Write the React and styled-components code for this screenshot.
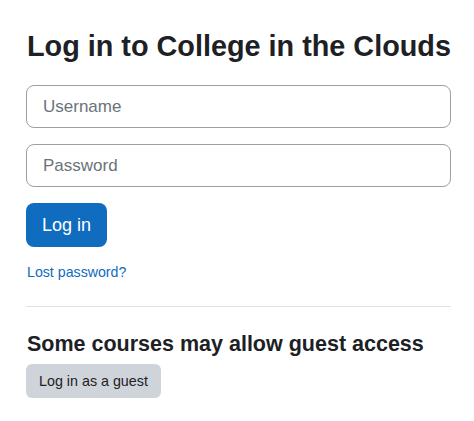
import React from "react";
import styled, { createGlobalStyle } from "styled-components";

const GlobalStyle = createGlobalStyle`
  html, body {
    margin: 0;
    padding: 0;
    background: #ffffff;
    font-family: "Liberation Sans", Arial, sans-serif;
    color: #1d2125;
  }
`;

const Page = styled.div`
  width: 474px;
  height: 421px;
  box-sizing: border-box;
  padding: 26px 23px 0 26px;
  display: flex;
  flex-direction: column;
`;

const Title = styled.h1`
  margin: 0 0 0 1px;
  font-size: 28.8px;
  line-height: 40px;
  font-weight: 700;
  color: #1d2125;
`;

const Form = styled.form`
  display: flex;
  flex-direction: column;
  gap: 16px;
  margin-top: 19px;
`;

const Input = styled.input`
  box-sizing: border-box;
  width: 425px;
  height: 43px;
  padding: 0 16px;
  border: 1px solid #9aa0a6;
  border-radius: 8px;
  font-family: inherit;
  font-size: 17px;
  color: #1d2125;
  outline: none;
  &::placeholder {
    color: #6a737b;
  }
`;

const Button = styled.button`
  box-sizing: border-box;
  align-self: flex-start;
  border: none;
  font-family: inherit;
  cursor: pointer;
  color: ${(p) => (p.$primary ? "#ffffff" : "#1d2125")};
  background: ${(p) => (p.$primary ? "#0f6cbf" : "#ced4da")};
  border-radius: ${(p) => (p.$primary ? "8px" : "6px")};
  font-size: ${(p) => (p.$primary ? "18px" : "14.3px")};
  height: ${(p) => (p.$primary ? "44px" : "34px")};
  padding: ${(p) => (p.$primary ? "0 16px" : "0 13px")};
`;

const LostLink = styled.a`
  display: block;
  margin: 17px 0 0 1px;
  font-size: 14.2px;
  color: #0f6cbf;
  text-decoration: none;
`;

const Divider = styled.hr`
  width: 425px;
  margin: 26px 0 0 0;
  border: none;
  border-top: 1px solid #dee2e6;
`;

const SubTitle = styled.h2`
  margin: 22px 0 5px 1px;
  font-size: 21.5px;
  line-height: 30px;
  font-weight: 700;
  color: #1d2125;
`;

export default function App() {
  return (
    <>
      <GlobalStyle />
      <Page>
        <Title>Log in to College in the Clouds</Title>
        <Form onSubmit={(e) => e.preventDefault()}>
          <Input type="text" placeholder="Username" />
          <Input type="password" placeholder="Password" />
          <Button $primary type="submit">Log in</Button>
        </Form>
        <LostLink href="#">Lost password?</LostLink>
        <Divider />
        <SubTitle>Some courses may allow guest access</SubTitle>
        <Button type="button">Log in as a guest</Button>
      </Page>
    </>
  );
}
